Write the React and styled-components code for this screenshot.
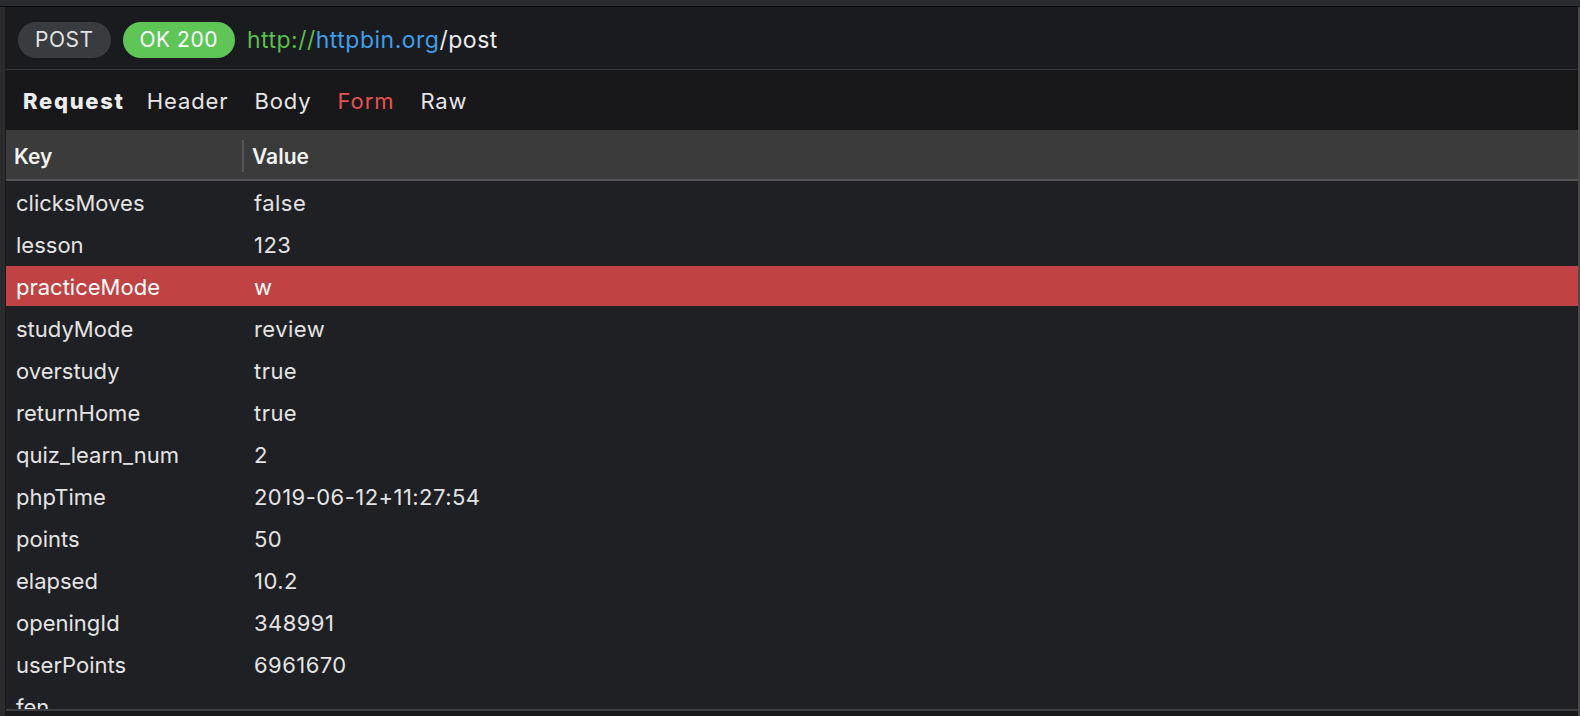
import React from "react";
import styled, { createGlobalStyle } from "styled-components";

const Global = createGlobalStyle`
  html, body { margin: 0; padding: 0; background: #19191b; }
  body { font-family: Inter, "Noto Sans", "Liberation Sans", sans-serif; -webkit-font-smoothing: antialiased; }
  * { box-sizing: border-box; }
`;

const Frame = styled.div`
  width: 1580px;
  height: 716px;
  display: flex;
  flex-direction: column;
  overflow: hidden;
  background: #19191b;
`;

const TopStrip = styled.div`
  height: 7px;
  flex: none;
  background: #2a2b2f;
  border-bottom: 1px solid #0c0c0d;
`;

const Body = styled.div`
  flex: 1;
  display: flex;
  min-height: 0;
`;

const LeftStrip = styled.div`
  width: 6px;
  flex: none;
  background: #2b2b2e;
  border-right: 1px solid #1c1c1e;
`;

const RightEdge = styled.div`
  width: 2px;
  flex: none;
  background: #4a4a4b;
`;

const Main = styled.div`
  flex: 1;
  display: flex;
  flex-direction: column;
  min-width: 0;
`;

const Header = styled.div`
  height: 63px;
  flex: none;
  display: flex;
  align-items: center;
  gap: 12px;
  padding: 3px 0 0 12px;
  background: #1a1b1e;
  border-bottom: 1px solid #343538;
`;

const Pill = styled.span`
  height: 36px;
  display: inline-flex;
  align-items: center;
  padding: 0 17px;
  border-radius: 18px;
  font-size: 21px;
  letter-spacing: 0.5px;
  background: ${(p) => p.$bg};
  color: ${(p) => p.$fg};
`;

const Url = styled.span`
  font-size: 23px;
  color: #ececec;
  letter-spacing: 0.5px;
`;

const Seg = styled.span`
  color: ${(p) => p.$c};
`;

const Tabs = styled.div`
  height: 60px;
  flex: none;
  display: flex;
  align-items: center;
  gap: 26px;
  padding: 1px 0 0 17px;
  background: #18181b;
`;

const Tab = styled.span`
  font-size: 22px;
  font-weight: ${(p) => (p.$title ? 800 : 400)};
  letter-spacing: ${(p) => (p.$title ? 1.7 : 0.9)}px;
  color: ${(p) => (p.$active ? "#e5524f" : p.$title ? "#ececec" : "#e6e6e6")};
  margin-right: ${(p) => (p.$title ? -4 : 0)}px;
`;

const Table = styled.div`
  flex: 1;
  min-height: 0;
  display: flex;
  flex-direction: column;
  background: #1f2023;
  border-bottom: 2px solid #3d3e40;
  overflow: hidden;
`;

const HeadRow = styled.div`
  height: 51px;
  flex: none;
  display: grid;
  grid-template-columns: 236px 1fr;
  align-items: center;
  padding-top: 3px;
  background: #3a3b3a;
  border-bottom: 2px solid #555655;
`;

const HeadCell = styled.div`
  font-size: 21px;
  font-weight: 600;
  color: #f2f2f2;
  padding-left: ${(p) => p.$pad}px;
  height: 32px;
  display: flex;
  align-items: center;
  border-left: ${(p) => (p.$divider ? "2px solid #555655" : "none")};
`;

const Rows = styled.div`
  display: flex;
  flex-direction: column;
  gap: 2px;
  padding-top: 1px;
`;

const Row = styled.div`
  height: 40px;
  flex: none;
  display: grid;
  grid-template-columns: 236px 1fr;
  align-items: center;
  padding-top: 2px;
  background: ${(p) => (p.$selected ? "#c04242" : "transparent")};
  color: ${(p) => (p.$selected ? "#ffffff" : "#e4e4e4")};
  font-size: 22px;
`;

const Cell = styled.div`
  padding-left: ${(p) => p.$pad}px;
  letter-spacing: ${(p) => p.$ls || 0}px;
  white-space: nowrap;
`;

const BottomStrip = styled.div`
  height: 5px;
  flex: none;
  background: #19191b;
`;

const data = [
  ["clicksMoves", "false"],
  ["lesson", "123"],
  ["practiceMode", "w"],
  ["studyMode", "review"],
  ["overstudy", "true"],
  ["returnHome", "true"],
  ["quiz_learn_num", "2"],
  ["phpTime", "2019-06-12+11:27:54"],
  ["points", "50"],
  ["elapsed", "10.2"],
  ["openingId", "348991"],
  ["userPoints", "6961670"],
  ["fen", ""],
];

export default function App() {
  return (
    <>
      <Global />
      <Frame>
        <TopStrip />
        <Body>
          <LeftStrip />
          <Main>
            <Header>
              <Pill $bg="#3a3b3e" $fg="#e2e2e2">POST</Pill>
              <Pill $bg="#5ec657" $fg="#ffffff">OK 200</Pill>
              <Url>
                <Seg $c="#5bbf4c">http://</Seg>
                <Seg $c="#3f9fea">httpbin.org</Seg>
                <Seg $c="#ececec">/post</Seg>
              </Url>
            </Header>
            <Tabs>
              <Tab $title>Request</Tab>
              <Tab>Header</Tab>
              <Tab>Body</Tab>
              <Tab $active>Form</Tab>
              <Tab>Raw</Tab>
            </Tabs>
            <Table>
              <HeadRow>
                <HeadCell $pad={8}>Key</HeadCell>
                <HeadCell $pad={8} $divider>Value</HeadCell>
              </HeadRow>
              <Rows>
                {data.map(([k, v], i) => (
                  <Row key={k} $selected={i === 2}>
                    <Cell $pad={10}>{k}</Cell>
                    <Cell $pad={12} $ls={0.45}>{v}</Cell>
                  </Row>
                ))}
              </Rows>
            </Table>
            <BottomStrip />
          </Main>
          <RightEdge />
        </Body>
      </Frame>
    </>
  );
}
